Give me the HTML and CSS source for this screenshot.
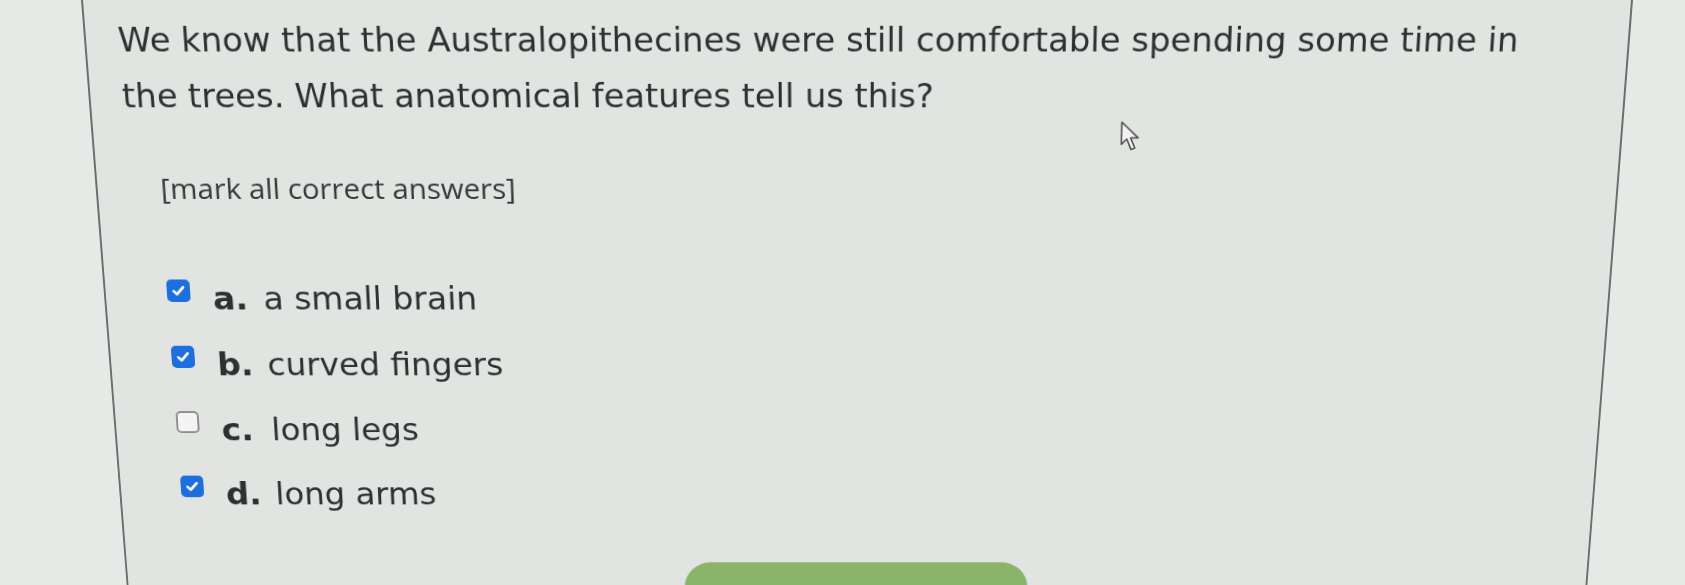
FILE: index.html
```html
<!DOCTYPE html>
<html>
<head>
<meta charset="utf-8">
<link rel="stylesheet" href="styles.css">
</head>
<body>
<div class="page">
  <div class="card">
    <p class="question">We know that the Australopithecines were still comfortable spending some time in the trees. What anatomical features tell us this?</p>
    <p class="instructions">[mark all correct answers]</p>
    <ul class="options">
      <li class="option"><span class="box checked"><svg viewBox="0 0 24 24" class="tick"><path d="M6 12.5l4 4 8-9" /></svg></span><span class="letter">a.</span><span class="text">a small brain</span></li>
      <li class="option"><span class="box checked"><svg viewBox="0 0 24 24" class="tick"><path d="M6 12.5l4 4 8-9" /></svg></span><span class="letter">b.</span><span class="text">curved fingers</span></li>
      <li class="option"><span class="box"></span><span class="letter">c.</span><span class="text">long legs</span></li>
      <li class="option"><span class="box checked"><svg viewBox="0 0 24 24" class="tick"><path d="M6 12.5l4 4 8-9" /></svg></span><span class="letter">d.</span><span class="text">long arms</span></li>
    </ul>
    <div class="actions"><div class="submit"></div></div>
    <svg class="cursor" viewBox="0 0 20 32"><path d="M2 2 L2 23 L7 18 L11 28 L14.5 26.5 L10.5 17 L17.5 17 Z" /></svg>
  </div>
</div>
</body>
</html>
```
FILE: styles.css
```css
html, body {
  margin: 0;
  padding: 0;
  background: #e7e9e7;
  overflow: hidden;
  height: 585px;
}
.page {
  width: 1685px;
  height: 720px;
  background: #e7e9e7;
  transform-origin: 857px 0;
  transform: perspective(1000px) rotateX(-5.74deg);
}
.card {
  position: relative;
  margin-left: 81px;
  width: 1552px;
  height: 720px;
  box-sizing: border-box;
  border-left: 2px solid #6a6f6d;
  border-right: 2px solid #6a6f6d;
  background: #e2e4e2;
  padding-left: 32px;
  padding-top: 12px;
  color: #2e3130;
}
.question {
  margin: 0;
  font-family: "DejaVu Sans", Verdana, sans-serif;
  font-size: 34px;
  line-height: 57.2px;
  width: 1450px;
}
.instructions {
  margin: 47px 0 0 32px;
  font-family: "Open Sans", "DejaVu Sans", sans-serif;
  font-size: 30px;
  line-height: 40px;
  color: #363937;
}
.options {
  list-style: none;
  margin: 61px 0 0 31px;
  padding: 0;
}
.option {
  display: flex;
  align-items: flex-start;
  height: 71px;
  font-family: "DejaVu Sans", Verdana, sans-serif;
  font-size: 34px;
  line-height: 71px;
}
.box {
  flex: none;
  width: 24px;
  height: 24px;
  margin-top: 15px;
  box-sizing: border-box;
  border: 2px solid #8c8f8d;
  border-radius: 5px;
  background: #f3f4f3;
  margin-right: 23px;
  display: flex;
  align-items: center;
  justify-content: center;
}
.box.checked {
  background: #1d6fdd;
  border-color: #1d6fdd;
}
.tick {
  width: 20px;
  height: 20px;
  fill: none;
  stroke: #ffffff;
  stroke-width: 3.2;
  stroke-linecap: round;
  stroke-linejoin: round;
}
.letter {
  flex: none;
  width: 52px;
  font-weight: 700;
}
.actions {
  display: flex;
  justify-content: center;
  margin-top: 41px;
  padding-right: 34px;
}
.submit {
  width: 364px;
  height: 80px;
  background: #8bb46b;
  border-radius: 28px;
}
.cursor {
  position: absolute;
  left: 1040px;
  top: 122px;
  width: 22px;
  height: 35px;
  fill: #f1f2f1;
  stroke: #4a4d4b;
  stroke-width: 1.4;
  stroke-linejoin: round;
}
```
